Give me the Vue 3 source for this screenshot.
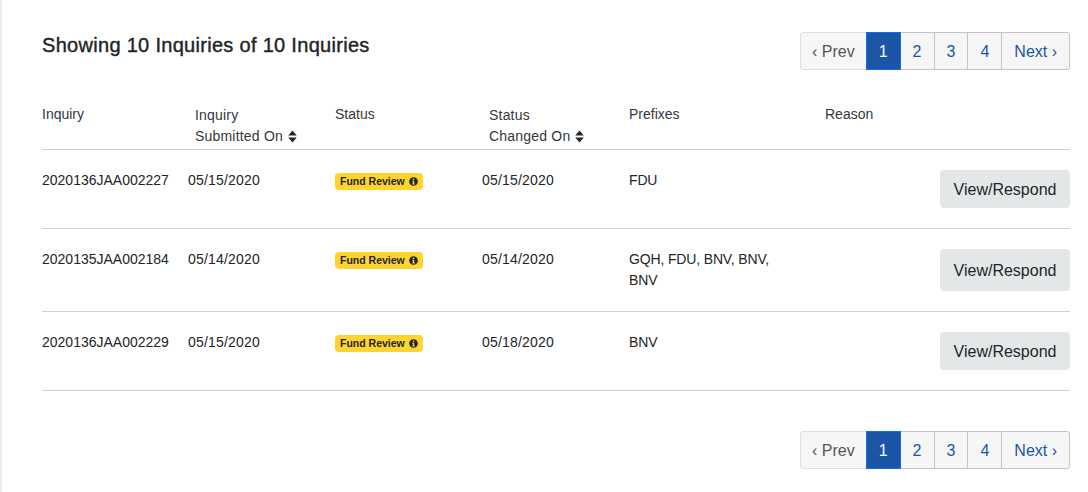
<script setup>
const pages = [1, 2, 3, 4]

const inquiries = [
  { id: '2020136JAA002227', submitted: '05/15/2020', changed: '05/15/2020', prefixes: 'FDU' },
  { id: '2020135JAA002184', submitted: '05/14/2020', changed: '05/14/2020', prefixes: 'GQH, FDU, BNV, BNV, BNV' },
  { id: '2020136JAA002229', submitted: '05/15/2020', changed: '05/18/2020', prefixes: 'BNV' }
]
</script>

<template>
  <div class="page">
    <div class="top">
      <h2>Showing 10 Inquiries of 10 Inquiries</h2>
      <ul class="pager">
        <li class="off">‹ Prev</li>
        <li v-for="p in pages" :key="p" :class="{ active: p === 1 }">{{ p }}</li>
        <li>Next ›</li>
      </ul>
    </div>

    <div class="row head">
      <div>Inquiry</div>
      <div class="sort">
        Inquiry<br />Submitted On
        <svg class="caret" viewBox="0 0 10 14"><path d="M5 0.5 9.6 5.8H0.4ZM5 13.5 0.4 8.2H9.6Z" /></svg>
      </div>
      <div>Status</div>
      <div class="sort">
        Status<br />Changed On
        <svg class="caret" viewBox="0 0 10 14"><path d="M5 0.5 9.6 5.8H0.4ZM5 13.5 0.4 8.2H9.6Z" /></svg>
      </div>
      <div>Prefixes</div>
      <div>Reason</div>
    </div>

    <div v-for="row in inquiries" :key="row.id" class="row item">
      <div>{{ row.id }}</div>
      <div class="date">{{ row.submitted }}</div>
      <div>
        <span class="badge">
          Fund Review
          <svg viewBox="0 0 10 10">
            <circle cx="5" cy="5" r="4.8" fill="#212529" />
            <rect x="4.2" y="1.7" width="1.6" height="1.6" fill="#ffd42f" />
            <path d="M3.6 4.2H5.8V7.2H6.5V8.2H3.6V7.2H4.3V5.2H3.6Z" fill="#ffd42f" />
          </svg>
        </span>
      </div>
      <div class="date">{{ row.changed }}</div>
      <div class="prefixes">{{ row.prefixes }}</div>
      <button>View/Respond</button>
    </div>

    <div class="bottom">
      <ul class="pager">
        <li class="off">‹ Prev</li>
        <li v-for="p in pages" :key="p" :class="{ active: p === 1 }">{{ p }}</li>
        <li>Next ›</li>
      </ul>
    </div>
  </div>
</template>

<style>
body {
  margin: 0;
  background: #fff;
}
</style>

<style scoped>
.page {
  box-sizing: border-box;
  width: 1088px;
  height: 492px;
  padding: 32px 18px 0 40px;
  border-left: 2px solid #ececec;
  overflow: hidden;
  color: #212529;
  font-family: "Liberation Sans", Arial, sans-serif;
  font-size: 14px;
  line-height: 21px;
}

.top {
  display: flex;
  justify-content: space-between;
  align-items: flex-start;
  height: 69px;
}

h2 {
  margin: 2px 0 0;
  font-size: 20px;
  font-weight: 500;
  line-height: 23px;
  letter-spacing: 0.3px;
  -webkit-text-stroke: 0.4px #212529;
}

.pager {
  display: flex;
  margin: 0;
  padding: 0;
  list-style: none;
  height: 38px;
  font-size: 16px;
  line-height: 37px;
  color: #1a55a6;
}

.pager li {
  box-sizing: border-box;
  min-width: 34px;
  padding: 0 12px;
  text-align: center;
  background: #f6f6f6;
  border: 1px solid #c4c4c4;
  margin-left: -1px;
}

.pager li:first-child {
  margin-left: 0;
  padding: 0 11px;
  border-color: #dedede;
  border-radius: 3px 0 0 3px;
}

.pager li:last-child {
  border-radius: 0 3px 3px 0;
}

.pager .off {
  color: #555;
}

.pager .active {
  background: #1a55a6;
  color: #fff;
  border-color: #0f6fe0;
  position: relative;
}

.row {
  display: grid;
  grid-template-columns: 146px 147px 147px 147px 196px 1fr;
  border-bottom: 1px solid #cdd2d6;
}

.head {
  box-sizing: border-box;
  height: 49px;
  padding-top: 3px;
  color: #33383d;
}

.sort {
  padding-top: 1px;
  padding-left: 7px;
  letter-spacing: 0.2px;
}

.caret {
  width: 11px;
  height: 13px;
  vertical-align: -2px;
  fill: #212529;
}

.item {
  padding: 20px 0;
}

.date {
  letter-spacing: 0.2px;
}

.prefixes {
  padding-right: 40px;
  letter-spacing: -0.15px;
}

.badge {
  display: flex;
  align-items: center;
  gap: 4px;
  width: fit-content;
  height: 17px;
  margin-top: 3px;
  padding: 0 5px;
  background: #ffd42f;
  border-radius: 4px;
  font-size: 10.5px;
  font-weight: 700;
  line-height: 17px;
}

.badge svg {
  width: 9px;
  height: 9px;
}

button {
  justify-self: end;
  width: 130px;
  min-height: 38px;
  padding: 2px 0 0;
  border: 0;
  border-radius: 4px;
  background: #e4e7e8;
  color: #212529;
  font-family: inherit;
  font-size: 16px;
}

.bottom {
  display: flex;
  justify-content: flex-end;
  margin-top: 40px;
}
</style>
